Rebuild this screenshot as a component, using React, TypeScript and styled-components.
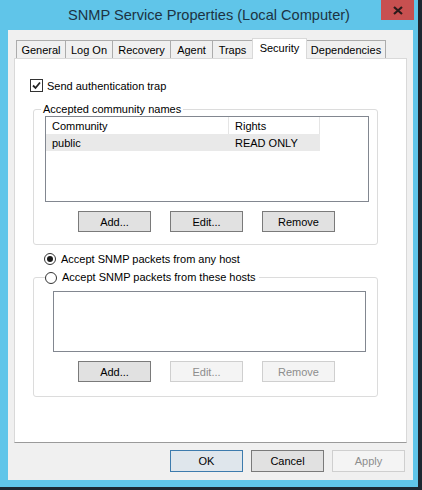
import React from 'react'
import styled, { createGlobalStyle } from 'styled-components'

const GlobalStyle = createGlobalStyle`
  html, body {
    margin: 0;
    padding: 0;
    background: #1d2731;
  }
  body {
    font-family: "Liberation Sans", Arial, sans-serif;
    font-size: 11px;
    color: #000;
  }
`

const Frame = styled.div`
  width: 418px;
  height: 487px;
  background: #60c5e9;
  display: flex;
  flex-direction: column;
`

const TitleBar = styled.div`
  position: relative;
  height: 30px;
  display: flex;
  align-items: center;
  justify-content: center;
`

const Title = styled.div`
  font-size: 14.6px;
  color: #1c3343;
  padding-bottom: 1px;
`

const CloseButton = styled.div`
  position: absolute;
  top: 0;
  right: 4px;
  width: 33px;
  height: 20px;
  background: #c75050;
  display: flex;
  align-items: center;
  justify-content: center;
`

const Client = styled.div`
  margin: 0 5px 0 8px;
  height: 450px;
  background: #f0f0f0;
  padding: 8px 6px 0 6px;
  box-sizing: border-box;
  display: flex;
  flex-direction: column;
`

const TabStrip = styled.div`
  display: flex;
  align-items: flex-end;
  height: 20px;
  padding-left: 2px;
`

const Tab = styled.div<{ $w: number; $active?: boolean }>`
  position: relative;
  box-sizing: border-box;
  width: ${p => p.$w}px;
  height: ${p => (p.$active ? 21 : 18)}px;
  margin-left: -1px;
  margin-bottom: ${p => (p.$active ? -1 : 0)}px;
  z-index: ${p => (p.$active ? 1 : 0)};
  border: 1px solid ${p => (p.$active ? '#d9d9d9' : '#acacac')};
  border-bottom: none;
  background: ${p => (p.$active ? '#fff' : '#f0f0f0')};
  display: flex;
  align-items: ${p => (p.$active ? 'flex-start' : 'center')};
  padding-top: ${p => (p.$active ? 3 : 0)}px;
  justify-content: center;
  font-size: 11px;
  color: #000;

  &:first-child {
    margin-left: 0;
  }
`

const Panel = styled.div`
  box-sizing: border-box;
  height: 385px;
  background: #fff;
  border: 1px solid #d9d9d9;
  border-bottom-color: #9a9a9a;
  padding: 20px 0 0 15px;
`

const CheckRow = styled.label`
  display: flex;
  align-items: center;
  gap: 4px;
  height: 13px;
`

const CheckBox = styled.span`
  box-sizing: border-box;
  width: 13px;
  height: 13px;
  border: 1px solid #333;
  background: #fff;
  display: flex;
  align-items: center;
  justify-content: center;
`

const Group = styled.fieldset<{ $h: number }>`
  box-sizing: border-box;
  width: 345px;
  height: ${p => p.$h}px;
  margin: 0 0 0 3px;
  padding: 0 8px 0 11px;
  border: 1px solid #dcdcdc;
  border-radius: 3px;
`

const Legend = styled.legend`
  padding: 0 2px;
  margin-left: -4px;
  line-height: 13px;
`

const RadioLegend = styled.legend`
  padding: 0 3px 0 0;
  margin-left: 0;
  line-height: 13px;
`

const RadioRow = styled.label<{ $ml?: number }>`
  display: flex;
  align-items: center;
  gap: 5px;
  height: 13px;
  margin-left: ${p => p.$ml ?? 0}px;
`

const Radio = styled.span<{ $on?: boolean }>`
  box-sizing: border-box;
  width: 12px;
  height: 12px;
  border: 1px solid #333;
  border-radius: 50%;
  background: #fff;
  display: flex;
  align-items: center;
  justify-content: center;

  &::after {
    content: '';
    width: 6px;
    height: 6px;
    border-radius: 50%;
    background: ${p => (p.$on ? '#1a1a1a' : 'transparent')};
  }
`

const ListView = styled.div<{ $w: number; $h: number; $ml: number; $mt?: number }>`
  box-sizing: border-box;
  width: ${p => p.$w}px;
  height: ${p => p.$h}px;
  margin-left: ${p => p.$ml}px;
  margin-top: ${p => p.$mt ?? 0}px;
  border: 1px solid #828790;
  background: #fff;
`

const HeaderRow = styled.div`
  display: flex;
  height: 17px;
`

const HeaderCell = styled.div<{ $w: number }>`
  box-sizing: border-box;
  width: ${p => p.$w}px;
  padding-left: 6px;
  border-right: 1px solid #e5e5e5;
  display: flex;
  align-items: center;
`

const Row = styled.div<{ $selected?: boolean }>`
  display: flex;
  height: 17px;
  width: 274px;
  background: ${p => (p.$selected ? '#e9e9e9' : 'transparent')};
`

const Cell = styled.div<{ $w: number }>`
  box-sizing: border-box;
  width: ${p => p.$w}px;
  padding-left: 6px;
  display: flex;
  align-items: center;
`

const ButtonRow = styled.div<{ $mt: number }>`
  display: flex;
  justify-content: center;
  gap: 19px;
  margin-top: ${p => p.$mt}px;
  padding-right: 1px;
`

const Button = styled.div<{ $disabled?: boolean; $default?: boolean }>`
  box-sizing: border-box;
  width: 73px;
  height: 21px;
  display: flex;
  align-items: center;
  justify-content: center;
  font-size: 11px;
  border: 1px solid
    ${p => (p.$disabled ? '#cfcfcf' : p.$default ? '#3d7bad' : '#7a7a7a')};
  background: ${p => (p.$disabled ? '#f4f4f4' : p.$default ? '#dfe6ec' : '#e1e1e1')};
  color: ${p => (p.$disabled ? '#8d8d8d' : '#000')};
`

const Footer = styled.div`
  display: flex;
  justify-content: flex-end;
  gap: 8px;
  margin-top: 7px;
  padding-right: 2px;

  ${Button} {
    height: 22px;
  }
`

const Spacer = styled.div<{ $h: number }>`
  height: ${p => p.$h}px;
`

const tabs = [
  { label: 'General', w: 50 },
  { label: 'Log On', w: 48 },
  { label: 'Recovery', w: 59 },
  { label: 'Agent', w: 43 },
  { label: 'Traps', w: 41 },
  { label: 'Security', w: 55, active: true },
  { label: 'Dependencies', w: 80 },
]

export default function App() {
  return (
    <>
      <GlobalStyle />
      <Frame>
        <TitleBar>
          <Title>SNMP Service Properties (Local Computer)</Title>
          <CloseButton>
            <svg width="10" height="9" viewBox="0 0 10 9">
              <path d="M1 1 L9 8 M9 1 L1 8" stroke="#2a1a1a" strokeWidth="2.2" />
            </svg>
          </CloseButton>
        </TitleBar>
        <Client>
          <TabStrip>
            {tabs.map(t => (
              <Tab key={t.label} $w={t.w} $active={t.active}>
                {t.label}
              </Tab>
            ))}
          </TabStrip>
          <Panel>
            <CheckRow>
              <CheckBox>
                <svg width="9" height="9" viewBox="0 0 9 9">
                  <path d="M1 4.5 L3.5 7 L8 1.5" fill="none" stroke="#222" strokeWidth="1.8" />
                </svg>
              </CheckBox>
              Send authentication trap
            </CheckRow>
            <Spacer $h={11} />
            <Group $h={142}>
              <Legend>Accepted community names</Legend>
              <ListView $w={324} $h={86} $ml={0}>
                <HeaderRow>
                  <HeaderCell $w={183}>Community</HeaderCell>
                  <HeaderCell $w={91}>Rights</HeaderCell>
                </HeaderRow>
                <Row $selected>
                  <Cell $w={183}>public</Cell>
                  <Cell $w={91}>READ ONLY</Cell>
                </Row>
              </ListView>
              <ButtonRow $mt={9}>
                <Button>Add...</Button>
                <Button>Edit...</Button>
                <Button>Remove</Button>
              </ButtonRow>
            </Group>
            <Spacer $h={7} />
            <RadioRow $ml={14}>
              <Radio $on />
              Accept SNMP packets from any host
            </RadioRow>
            <Spacer $h={6} />
            <Group $h={126}>
              <RadioLegend>
                <RadioRow>
                  <Radio />
                  Accept SNMP packets from these hosts
                </RadioRow>
              </RadioLegend>
              <ListView $w={313} $h={61} $ml={8} $mt={7} />
              <ButtonRow $mt={9}>
                <Button>Add...</Button>
                <Button $disabled>Edit...</Button>
                <Button $disabled>Remove</Button>
              </ButtonRow>
            </Group>
          </Panel>
          <Footer>
            <Button $default>OK</Button>
            <Button>Cancel</Button>
            <Button $disabled>Apply</Button>
          </Footer>
        </Client>
      </Frame>
    </>
  )
}
